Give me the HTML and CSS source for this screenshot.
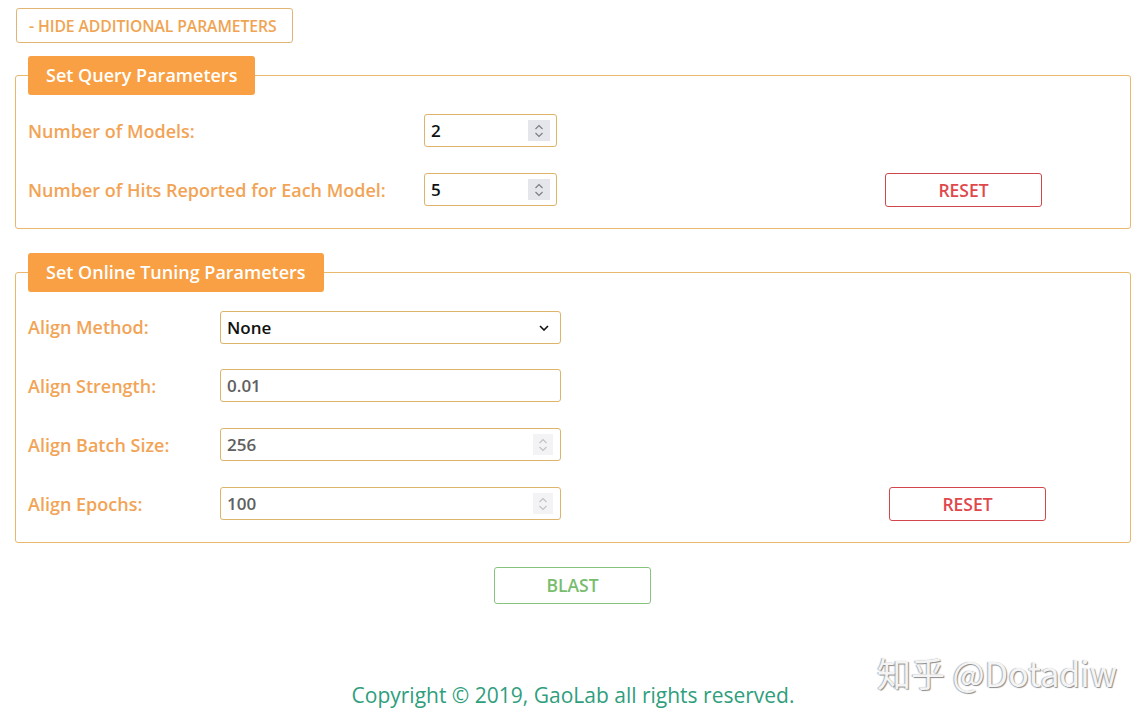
FILE: index.html
```html
<!DOCTYPE html>
<html lang="en">
<head>
<meta charset="utf-8">
<title>Parameters</title>
<link rel="stylesheet" href="styles.css">
</head>
<body>
<div class="page">
  <button class="toggle-btn">- HIDE ADDITIONAL PARAMETERS</button>

  <fieldset class="panel">
    <legend class="panel-title">Set Query Parameters</legend>
    <div class="grid grid-query">
      <label class="field-label">Number of Models:</label>
      <div class="num-input">
        <input class="text-input value-dark" type="text" value="2">
        <span class="spinner"><svg viewBox="0 0 10 16" width="10" height="16"><path d="M1.5 6 L5 2.5 L8.5 6 M1.5 10 L5 13.5 L8.5 10" fill="none" stroke="currentColor" stroke-width="1.1"/></svg></span>
      </div>
      <div></div>
      <div></div>

      <label class="field-label">Number of Hits Reported for Each Model:</label>
      <div class="num-input">
        <input class="text-input value-dark" type="text" value="5">
        <span class="spinner"><svg viewBox="0 0 10 16" width="10" height="16"><path d="M1.5 6 L5 2.5 L8.5 6 M1.5 10 L5 13.5 L8.5 10" fill="none" stroke="currentColor" stroke-width="1.1"/></svg></span>
      </div>
      <div></div>
      <button class="reset-btn">RESET</button>
    </div>
  </fieldset>

  <fieldset class="panel">
    <legend class="panel-title">Set Online Tuning Parameters</legend>
    <div class="grid grid-tuning">
      <label class="field-label">Align Method:</label>
      <div class="select-wrap">
        <select class="select-input"><option>None</option></select>
        <svg class="select-arrow" viewBox="0 0 10 6" width="10" height="6"><path d="M1 1 L5 5 L9 1" fill="none" stroke="#111" stroke-width="1.6"/></svg>
      </div>
      <div></div>
      <div></div>

      <label class="field-label">Align Strength:</label>
      <div class="num-input">
        <input class="text-input value-muted" type="text" value="0.01">
      </div>
      <div></div>
      <div></div>

      <label class="field-label">Align Batch Size:</label>
      <div class="num-input">
        <input class="text-input value-muted" type="text" value="256">
        <span class="spinner spinner-light"><svg viewBox="0 0 10 16" width="10" height="16"><path d="M1.5 6 L5 2.5 L8.5 6 M1.5 10 L5 13.5 L8.5 10" fill="none" stroke="currentColor" stroke-width="1.1"/></svg></span>
      </div>
      <div></div>
      <div></div>

      <label class="field-label">Align Epochs:</label>
      <div class="num-input">
        <input class="text-input value-muted" type="text" value="100">
        <span class="spinner spinner-light"><svg viewBox="0 0 10 16" width="10" height="16"><path d="M1.5 6 L5 2.5 L8.5 6 M1.5 10 L5 13.5 L8.5 10" fill="none" stroke="currentColor" stroke-width="1.1"/></svg></span>
      </div>
      <div></div>
      <button class="reset-btn">RESET</button>
    </div>
  </fieldset>

  <div class="actions">
    <button class="blast-btn">BLAST</button>
  </div>

  <footer class="footer">Copyright © 2019, GaoLab all rights reserved.</footer>

  <div class="watermark">知乎 @Dotadiw</div>
</div>
</body>
</html>
```

FILE: styles.css
```css
* { box-sizing: border-box; }

html, body {
  margin: 0;
  padding: 0;
  background: #ffffff;
}

body {
  font-family: "Open Sans", "Noto Sans", sans-serif;
  width: 1148px;
  height: 723px;
  overflow: hidden;
}

.page {
  position: relative;
  padding: 8px 17px 0 15px;
  height: 723px;
}

.toggle-btn {
  display: block;
  margin: 0 0 13px 1px;
  height: 35px;
  width: 277px;
  padding: 0 0 0 12px;
  text-align: left;
  background: #fff;
  border: 1px solid #e2b575;
  border-radius: 3px;
  color: #f0a452;
  font-family: "Open Sans", sans-serif;
  font-weight: 600;
  font-size: 15.75px;
  letter-spacing: -0.1px;
  white-space: nowrap;
}

.panel {
  margin: 0 0 24px 0;
  padding: 0 12px 21px 12px;
  border: 1px solid #e8b86c;
  border-radius: 3px;
  min-width: 0;
}

.panel-title {
  background: #f8a043;
  color: #ffffff;
  font-weight: 600;
  font-size: 18px;
  line-height: 22px;
  padding: 8px 18px 9px 18px;
  border-radius: 3px;
  margin-left: 0;
}

.grid {
  display: grid;
  row-gap: 25.7px;
  align-items: center;
  padding-top: 19px;
}

.grid-query {
  grid-template-columns: 396px 133px 328px 157px;
}

.grid-tuning {
  grid-template-columns: 192px 341px 328px 157px;
}

.field-label {
  color: #f2a456;
  font-weight: 600;
  font-size: 18px;
  line-height: 22px;
  white-space: nowrap;
}

.num-input,
.select-wrap {
  position: relative;
  height: 33px;
}

.text-input,
.select-input {
  width: 100%;
  height: 33px;
  border: 1px solid #ddb46c;
  border-radius: 3px;
  padding: 0 6px;
  font-family: "Open Sans", sans-serif;
  font-size: 17px;
  font-weight: 600;
  background: #fff;
  outline: none;
}

.value-dark { color: #111111; }
.value-muted { color: #606060; }

.select-input {
  appearance: none;
  -webkit-appearance: none;
  color: #111;
}

.select-arrow {
  position: absolute;
  right: 12px;
  top: 14px;
  pointer-events: none;
}

.spinner {
  position: absolute;
  right: 7px;
  top: 6px;
  width: 22px;
  height: 21px;
  background: #e5e5ec;
  color: #7a7a80;
  display: flex;
  align-items: center;
  justify-content: center;
}

.spinner-light {
  right: 8px;
  width: 20px;
  background: #f3f3f6;
  color: #c0c0c6;
}

.reset-btn {
  height: 34px;
  width: 157px;
  background: #fff;
  border: 1px solid #d0484c;
  border-radius: 3px;
  color: #e0484c;
  font-family: "Open Sans", sans-serif;
  font-weight: 600;
  font-size: 17.5px;
}

.grid-tuning .reset-btn {
  margin-left: 0;
}

.actions {
  display: flex;
  justify-content: center;
  padding-right: 1px;
}

.blast-btn {
  height: 37px;
  width: 157px;
  background: #fff;
  border: 1px solid #86c47e;
  border-radius: 3px;
  color: #78bd6e;
  font-family: "Open Sans", sans-serif;
  font-weight: 600;
  font-size: 17.5px;
}

.footer {
  margin-top: 77px;
  text-align: center;
  color: #2f9e7d;
  font-size: 21px;
  line-height: 28px;
}

.watermark {
  position: absolute;
  left: 877px;
  top: 650px;
  font-family: "Noto Sans CJK SC", "Noto Sans", sans-serif;
  font-size: 34px;
  line-height: 46px;
  color: #f4f4f4;
  text-shadow: 1px 1px 1px #8a8a8a, -1px 0 1px #b0b0b0;
  white-space: nowrap;
}
```
